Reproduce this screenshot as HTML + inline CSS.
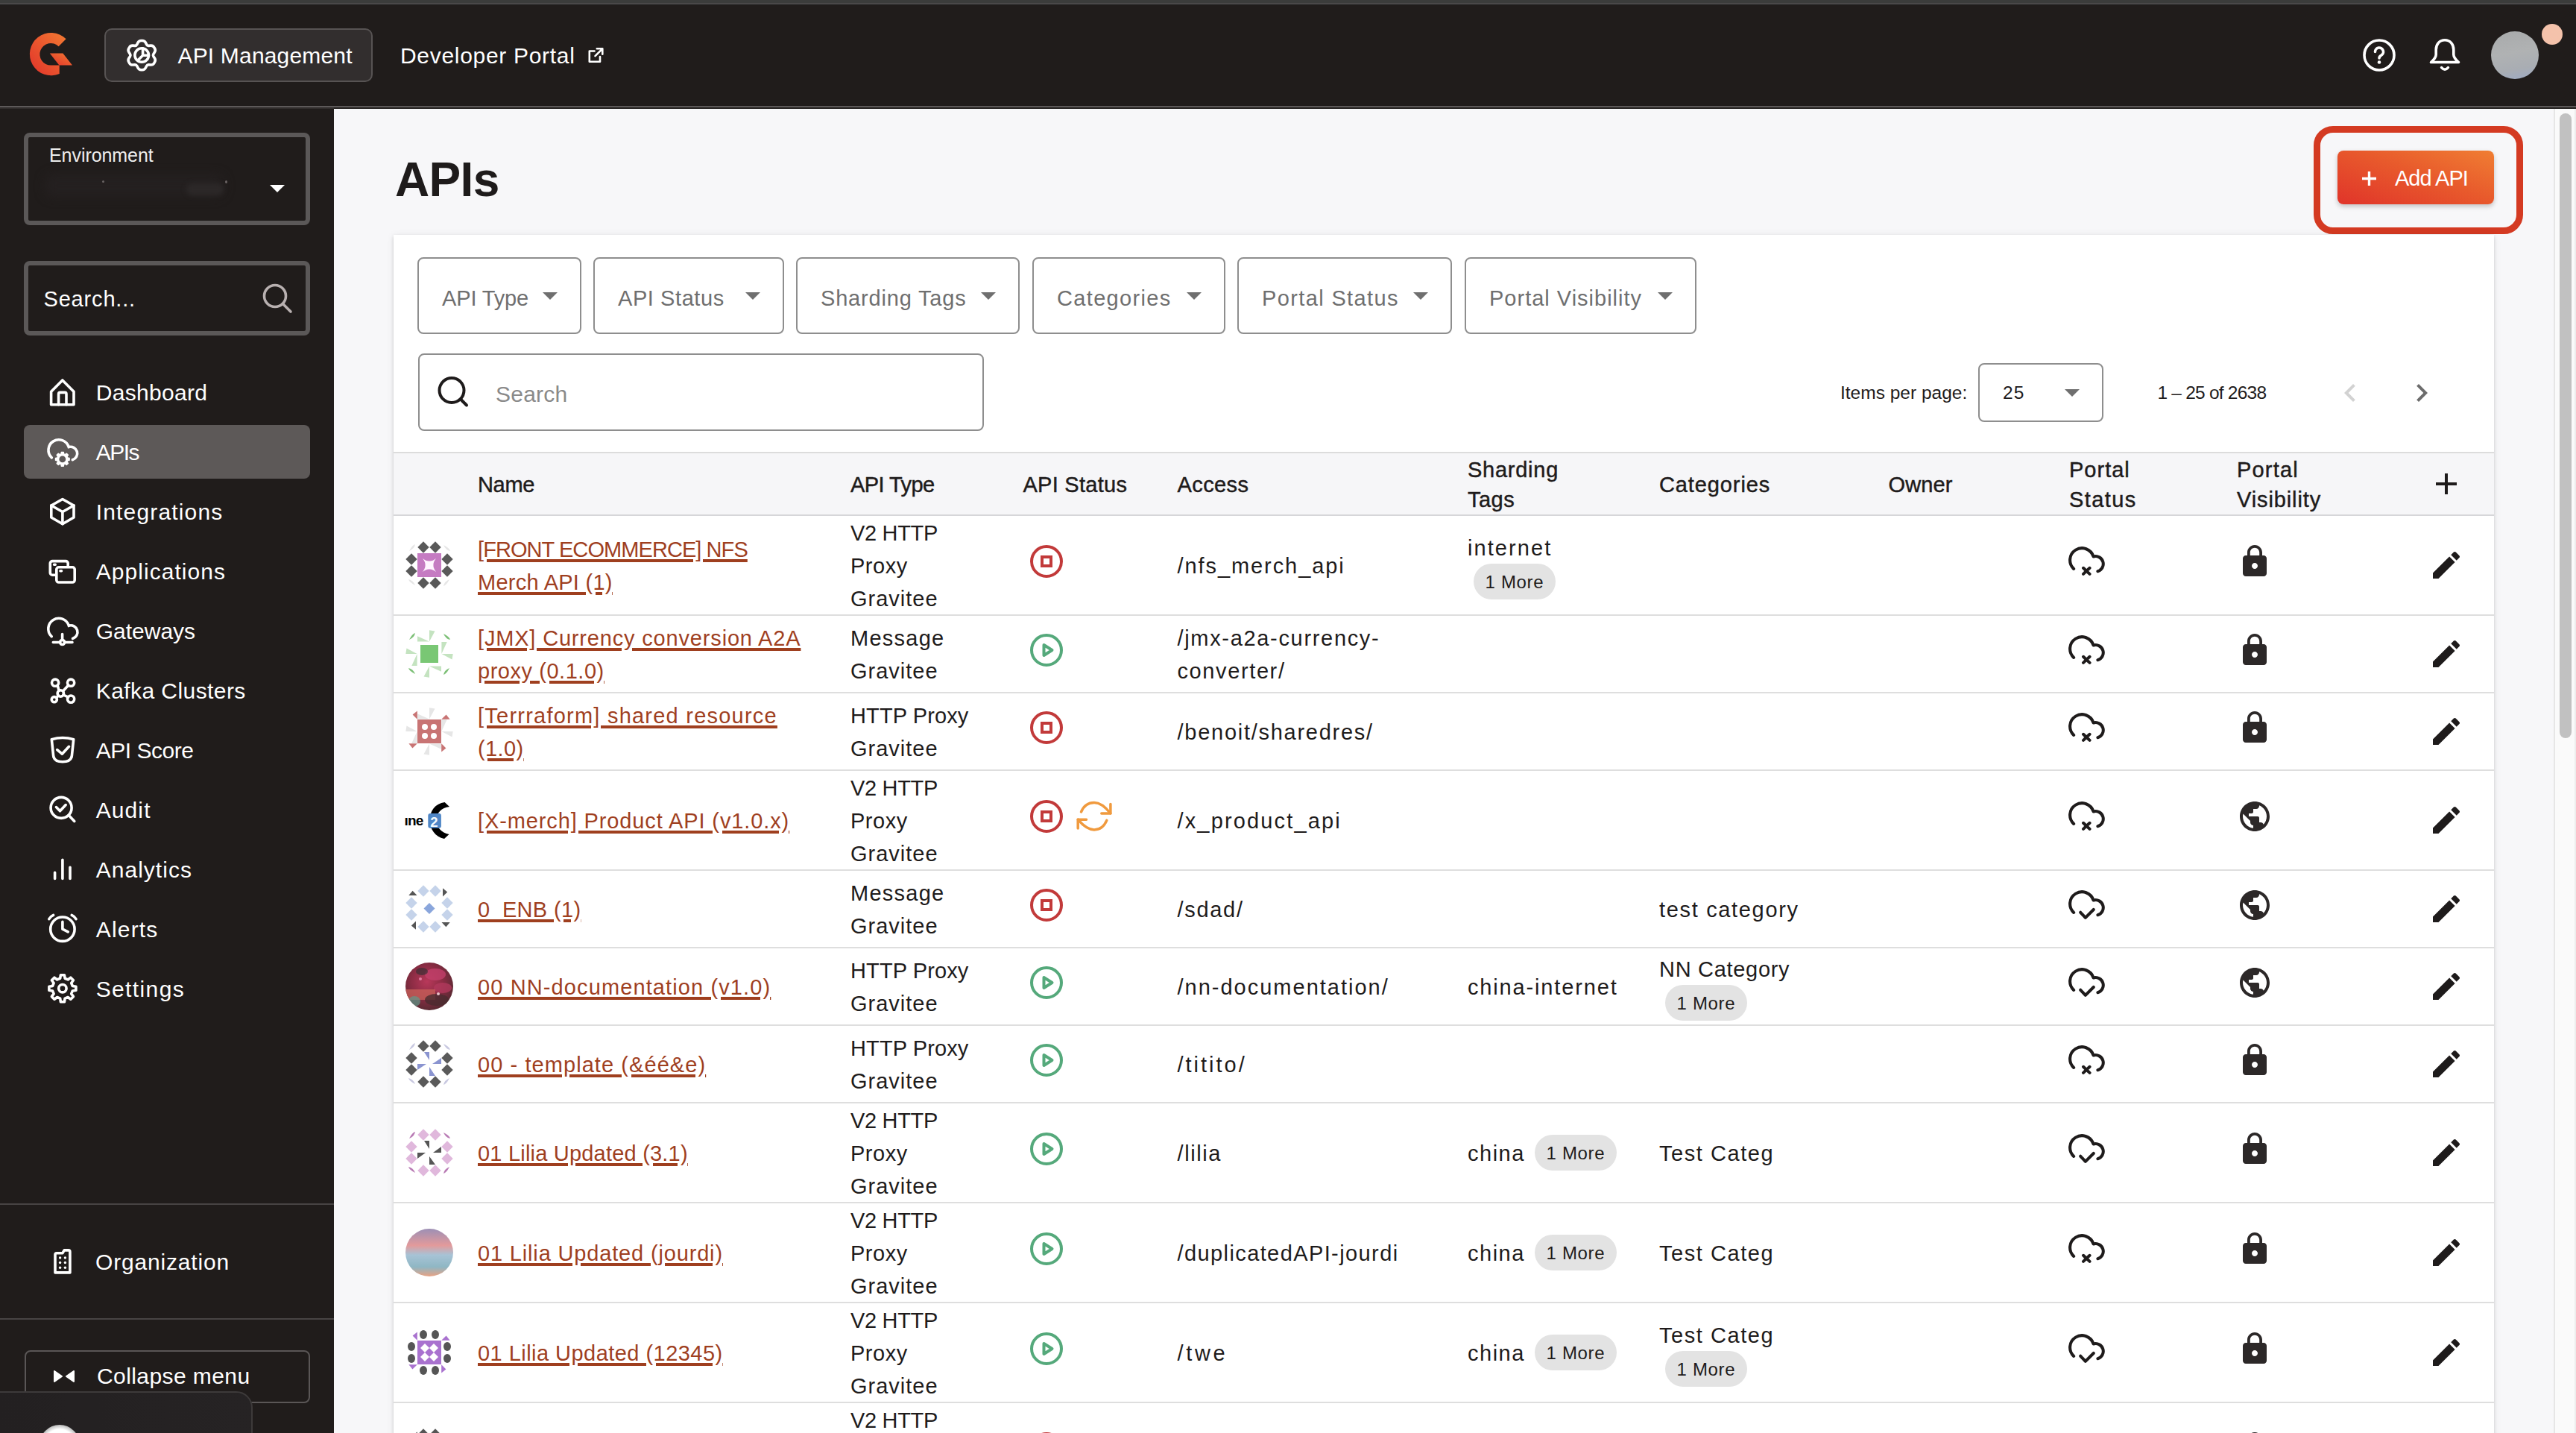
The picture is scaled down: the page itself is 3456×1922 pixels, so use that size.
<!DOCTYPE html><html><head><meta charset="utf-8"><title>APIs</title><style>
html,body{margin:0;padding:0}
body{width:3456px;height:1922px;overflow:hidden;position:relative;background:#f7f7f9;font-family:"Liberation Sans",sans-serif}
.t{position:absolute;white-space:nowrap}
svg{overflow:visible}
</style></head><body>
<div style="position:absolute;left:0px;top:0px;width:3456px;height:4px;background:#3b3c3b"></div>
<div style="position:absolute;left:0px;top:4px;width:3456px;height:2px;background:#4a4849"></div>
<div style="position:absolute;left:0px;top:6px;width:3456px;height:1px;background:#1c1b1b"></div>
<div style="position:absolute;left:0px;top:7px;width:3456px;height:135px;background:#201c1b"></div>
<div style="position:absolute;left:0px;top:142px;width:3456px;height:2px;background:#5d5959"></div>
<div style="position:absolute;left:0px;top:144px;width:448px;height:2px;background:#302c2b"></div>
<div style="position:absolute;left:448px;top:144px;width:3008px;height:2px;background:#242120"></div>
<div style="position:absolute;left:0px;top:146px;width:448px;height:1776px;background:#201c1b"></div>
<svg style="position:absolute;left:30px;top:35px;" width="80" height="80" viewBox="0 0 80 80"><defs><linearGradient id="lg" x1="0" y1="1" x2="1" y2="0"><stop offset="0" stop-color="#e2322a"/><stop offset="1" stop-color="#f27a32"/></linearGradient></defs>
<path fill="url(#lg)" d="M58.6 17.3 A28.6 28.6 0 1 0 49.7 63.9 L49.7 52.6 L38.4 52.6 A14.8 14.8 0 1 1 48.6 27.3 Z"/>
<path fill="url(#lg)" d="M36.8 36.4 L54.4 36.4 L67 52.4 L49.4 52.4 Z"/></svg>
<div style="position:absolute;left:140px;top:38px;width:360px;height:72px;background:#322e2e;border:2px solid #575353;border-radius:10px;box-sizing:border-box"></div>
<svg style="position:absolute;left:160px;top:45px" width="60" height="60" viewBox="160 45 60 60"><g fill="none" stroke="#fff" stroke-width="3.6" stroke-linecap="round" stroke-linejoin="round"><path d="M189.38 54.47 L191.02 54.47 Q194.02 54.47 195.35 57.15 L196.61 59.67 Q197.50 61.46 199.50 61.33 L202.30 61.16 Q205.29 60.98 206.79 63.58 L207.61 64.99 Q209.11 67.59 207.45 70.09 L205.90 72.43 Q204.80 74.10 205.90 75.77 L207.45 78.11 Q209.11 80.61 207.61 83.21 L206.79 84.62 Q205.29 87.22 202.30 87.04 L199.50 86.87 Q197.50 86.74 196.61 88.53 L195.35 91.05 Q194.02 93.73 191.02 93.73 L189.38 93.73 Q186.38 93.73 185.05 91.05 L183.79 88.53 Q182.90 86.74 180.90 86.87 L178.10 87.04 Q175.11 87.22 173.61 84.62 L172.79 83.21 Q171.29 80.61 172.95 78.11 L174.50 75.77 Q175.60 74.10 174.50 72.43 L172.95 70.09 Q171.29 67.59 172.79 64.99 L173.61 63.58 Q175.11 60.98 178.10 61.16 L180.90 61.33 Q182.90 61.46 183.79 59.67 L185.05 57.15 Q186.38 54.47 189.38 54.47 Z"/><circle cx="190.2" cy="74" r="9.3"/><path d="M191.6 64.8 V74.3 H199.4 M191.6 74.3 L185.6 80.2"/></g></svg>
<div class="t" style="left:238.5px;top:60.1px;font-size:30px;line-height:30px;color:#ffffff;letter-spacing:0.169px;font-weight:400;">API Management</div>
<div class="t" style="left:537px;top:59.9px;font-size:30px;line-height:30px;color:#ffffff;letter-spacing:0.693px;font-weight:400;">Developer Portal</div>
<svg style="position:absolute;left:780px;top:55px" width="40" height="40" viewBox="780 55 40 40"><g fill="none" stroke="#fff" stroke-width="2.6" stroke-linecap="round" stroke-linejoin="round"><path d="M797.5 68.5 H790.8 V82.8 H805 V76"/><path d="M798.5 75.2 L807.8 65.8 M800.8 65.3 H808.3 V72.8"/></g></svg>
<svg style="position:absolute;left:3168px;top:50px;" width="48" height="48" viewBox="0 0 48 48"><g fill="none" stroke="#fff" stroke-width="3.6" stroke-linecap="round"><circle cx="24" cy="24" r="20"/><path d="M18.5 19.5 a5.5 5.5 0 1 1 8 4.9 c-1.6 .8 -2.5 1.9 -2.5 3.6"/></g><circle cx="24" cy="33.5" r="2.3" fill="#fff"/></svg>
<svg style="position:absolute;left:3258px;top:50px;" width="44" height="48" viewBox="0 0 44 48"><g fill="none" stroke="#fff" stroke-width="3.6" stroke-linejoin="round" stroke-linecap="round"><path d="M22 3.8 c-7.5 0 -11.8 6 -11.8 13 v6.5 c0 3.5 -2.5 6.5 -6.7 10.2 h37 c-4.2 -3.7 -6.7 -6.7 -6.7 -10.2 v-6.5 c0 -7 -4.3 -13 -11.8 -13 z"/><path d="M17.6 40.6 q4.4 5 8.8 0"/></g></svg>
<div style="position:absolute;left:3342px;top:42px;width:64px;height:64px;border-radius:50%;background:linear-gradient(170deg,#a8aaab 0%,#b0b2b3 45%,#a9adb3 75%,#9dabc6 100%)"></div>
<div style="position:absolute;left:3410px;top:32px;width:28px;height:28px;border-radius:50%;background:#f4c2ab"></div>
<div style="position:absolute;left:32px;top:178px;width:384px;height:124px;border:6px solid #5b5858;border-radius:8px;box-sizing:border-box"></div>
<div class="t" style="left:66px;top:196.2px;font-size:25px;line-height:25px;color:#eeeeee;letter-spacing:-0.060px;font-weight:400;">Environment</div>
<div style="position:absolute;left:60px;top:234px;width:240px;height:30px;background:#242020;border-radius:12px;filter:blur(7px)"></div><div style="position:absolute;left:250px;top:246px;width:50px;height:16px;background:#2c2828;border-radius:8px;filter:blur(3px)"></div><div style="position:absolute;left:137px;top:242px;width:3px;height:3px;background:#6a6464;border-radius:50%"></div><div style="position:absolute;left:302px;top:242px;width:3px;height:4px;background:#6a6464;border-radius:50%"></div>
<svg style="position:absolute;left:362px;top:248px;" width="20" height="10" viewBox="0 0 20 10"><path d="M0 0 L20 0 L10 10 Z" fill="#fff"/></svg>
<div style="position:absolute;left:32px;top:350px;width:384px;height:100px;border:6px solid #5b5858;border-radius:8px;box-sizing:border-box"></div>
<div class="t" style="left:58.5px;top:386.7px;font-size:29px;line-height:29px;color:#ffffff;letter-spacing:0.825px;font-weight:400;">Search...</div>
<svg style="position:absolute;left:352px;top:380px;" width="40" height="40" viewBox="0 0 40 40"><g fill="none" stroke="#b8b0b0" stroke-width="3.6" stroke-linecap="round"><circle cx="17" cy="17" r="14.5"/><path d="M27.5 27.5 L38 38"/></g></svg>
<div style="position:absolute;left:32px;top:570px;width:384px;height:72px;background:#5d5958;border-radius:8px"></div>
<div class="t" style="left:128.7px;top:512.0px;font-size:30px;line-height:30px;color:#ffffff;letter-spacing:0.325px;font-weight:400;">Dashboard</div>
<div class="t" style="left:128.7px;top:592.0px;font-size:30px;line-height:30px;color:#ffffff;letter-spacing:-1.533px;font-weight:400;">APIs</div>
<div class="t" style="left:128.7px;top:672.0px;font-size:30px;line-height:30px;color:#ffffff;letter-spacing:1.164px;font-weight:400;">Integrations</div>
<div class="t" style="left:128.7px;top:752.0px;font-size:30px;line-height:30px;color:#ffffff;letter-spacing:1.055px;font-weight:400;">Applications</div>
<div class="t" style="left:128.7px;top:832.0px;font-size:30px;line-height:30px;color:#ffffff;letter-spacing:0.000px;font-weight:400;">Gateways</div>
<div class="t" style="left:128.7px;top:912.0px;font-size:30px;line-height:30px;color:#ffffff;letter-spacing:0.431px;font-weight:400;">Kafka Clusters</div>
<div class="t" style="left:128.7px;top:992.0px;font-size:30px;line-height:30px;color:#ffffff;letter-spacing:-0.475px;font-weight:400;">API Score</div>
<div class="t" style="left:128.7px;top:1072.0px;font-size:30px;line-height:30px;color:#ffffff;letter-spacing:1.100px;font-weight:400;">Audit</div>
<div class="t" style="left:128.7px;top:1152.0px;font-size:30px;line-height:30px;color:#ffffff;letter-spacing:1.025px;font-weight:400;">Analytics</div>
<div class="t" style="left:128.7px;top:1232.0px;font-size:30px;line-height:30px;color:#ffffff;letter-spacing:1.200px;font-weight:400;">Alerts</div>
<div class="t" style="left:128.7px;top:1312.0px;font-size:30px;line-height:30px;color:#ffffff;letter-spacing:1.371px;font-weight:400;">Settings</div>
<svg style="position:absolute;left:40px;top:490px" width="80" height="880" viewBox="40 490 80 880"><g fill="none" stroke="#fff" stroke-width="3.6" stroke-linecap="round" stroke-linejoin="round"><path d="M68.6 542.7 V525.2 L83.8 510 L99 525.2 V542.7 Z"/><path d="M78.6 542.7 V528.4 Q78.6 526.4 80.6 526.4 H87 Q89 526.4 89 528.4 V542.7"/></g><path transform="translate(64.5,589.5) scale(0.82)" d="M5.9 29.7 A17 17 0 1 1 33.8 12.3 A10.5 10.5 0 0 1 40 33.2" fill="none" stroke="#fff" stroke-width="4.39" stroke-linecap="round"/><path d="M82.33 606.62 L85.27 606.62 L85.60 608.93 L87.45 609.70 L89.33 608.30 L91.40 610.37 L90.00 612.25 L90.77 614.10 L93.08 614.43 L93.08 617.37 L90.77 617.70 L90.00 619.55 L91.40 621.43 L89.33 623.50 L87.45 622.10 L85.60 622.87 L85.27 625.18 L82.33 625.18 L82.00 622.87 L80.15 622.10 L78.27 623.50 L76.20 621.43 L77.60 619.55 L76.83 617.70 L74.52 617.37 L74.52 614.43 L76.83 614.10 L77.60 612.25 L76.20 610.37 L78.27 608.30 L80.15 609.70 L82.00 608.93 Z" fill="#fff" stroke="#fff" stroke-width="1.5" stroke-linejoin="round"/><circle cx="83.8" cy="615.9" r="4.4" fill="#5d5958"/><g fill="none" stroke="#fff" stroke-width="3.6" stroke-linecap="round" stroke-linejoin="round"><path d="M83.9 669.5 L99 678 V694 L83.9 702.7 L68.8 694 V678 Z"/><path d="M68.8 678 L83.9 686.5 L99 678 M83.9 686.5 V702.7"/></g><g fill="none" stroke="#fff" stroke-width="3.6" stroke-linecap="round" stroke-linejoin="round"><rect x="67.3" y="752.6" width="23.9" height="18.6" rx="3"/><rect x="75.8" y="760.8" width="24.4" height="20.2" rx="3" fill="#201c1b"/><path d="M72.6 757.3 h1.6 M80.9 765.8 h1.6"/></g><path transform="translate(64.3,829) scale(0.83)" d="M5.9 29.7 A17 17 0 1 1 33.8 12.3 A10.5 10.5 0 0 1 40 33.2" fill="none" stroke="#fff" stroke-width="4.34" stroke-linecap="round"/><g fill="none" stroke="#fff" stroke-width="3.6" stroke-linecap="round" stroke-linejoin="round"><path d="M71.3 861.5 H80.6 M86.6 861.5 H97 M83.6 850.5 V858.4"/><circle cx="83.6" cy="861.5" r="3"/></g><g fill="none" stroke="#fff" stroke-width="3.6" stroke-linecap="round" stroke-linejoin="round"><circle cx="74.1" cy="915.7" r="4.6"/><circle cx="95.1" cy="915.7" r="4.6"/><circle cx="81.3" cy="930" r="4.2"/><circle cx="72.8" cy="938.2" r="3.6"/><circle cx="95.1" cy="937.6" r="4.6"/><path d="M77.2 919.2 L79.2 926.4 M91.8 919 L84.5 927 M78.5 933 L75.6 935.6 M85 932 L91.6 935.2"/></g><g fill="none" stroke="#fff" stroke-width="3.6" stroke-linecap="round" stroke-linejoin="round"><path d="M69.3 991.8 Q84 987.2 98.7 991.8 L96.4 1013.5 Q95.6 1021.7 84 1021.7 Q72.4 1021.7 71.6 1013.5 Z"/><path d="M76.7 1005.6 L83.3 1011.2 L92.5 1001.3"/></g><g fill="none" stroke="#fff" stroke-width="3.6" stroke-linecap="round" stroke-linejoin="round"><circle cx="82.1" cy="1083.4" r="14"/><path d="M92.2 1093.6 L99.8 1101.4"/><path d="M75.4 1082.6 L80.5 1087.8 L88.2 1079.6"/></g><g fill="none" stroke="#fff" stroke-width="3.6" stroke-linecap="round" stroke-linejoin="round"><path d="M73.6 1170.2 V1178.4 M83.9 1153.3 V1178.4 M94 1163.3 V1178.4"/></g><g fill="none" stroke="#fff" stroke-width="3.6" stroke-linecap="round" stroke-linejoin="round"><circle cx="83.9" cy="1246.2" r="16.2"/><path d="M83.9 1236.4 V1246.2 L91.3 1249.8"/><path d="M65.8 1232.6 Q68 1229 71.6 1227.4 M102 1232.6 Q99.8 1229 96.2 1227.4"/></g><g fill="none" stroke="#fff" stroke-width="3.6" stroke-linecap="round" stroke-linejoin="round"><path d="M81.37 1307.68 L86.43 1307.68 L87.12 1312.28 L91.11 1313.93 L94.85 1311.16 L98.44 1314.75 L95.67 1318.49 L97.32 1322.48 L101.92 1323.17 L101.92 1328.23 L97.32 1328.92 L95.67 1332.91 L98.44 1336.65 L94.85 1340.24 L91.11 1337.47 L87.12 1339.12 L86.43 1343.72 L81.37 1343.72 L80.68 1339.12 L76.69 1337.47 L72.95 1340.24 L69.36 1336.65 L72.13 1332.91 L70.48 1328.92 L65.88 1328.23 L65.88 1323.17 L70.48 1322.48 L72.13 1318.49 L69.36 1314.75 L72.95 1311.16 L76.69 1313.93 L80.68 1312.28 Z"/><circle cx="83.9" cy="1325.7" r="5.2"/></g></svg>
<div style="position:absolute;left:0px;top:1614px;width:448px;height:2px;background:#484444"></div>
<svg style="position:absolute;left:60px;top:1660px" width="60" height="60" viewBox="60 1660 60 60"><g fill="none" stroke="#fff" stroke-width="3.6" stroke-linecap="round" stroke-linejoin="round" stroke-width="3.8"><path d="M74 1706.9 V1682.7 Q74 1680.7 76 1680.7 H84 L86.2 1676.9 H91.8 Q93.9 1676.9 93.9 1679 V1706.9 Z"/></g><g fill="#fff"><circle cx="80.6" cy="1687" r="1.7"/><circle cx="87.4" cy="1687" r="1.7"/><circle cx="80.6" cy="1693.5" r="1.7"/><circle cx="87.4" cy="1693.5" r="1.7"/><circle cx="80.6" cy="1700.2" r="1.7"/><circle cx="87.4" cy="1700.2" r="1.7"/></g></svg>
<div class="t" style="left:128px;top:1678.1px;font-size:30px;line-height:30px;color:#ffffff;letter-spacing:0.818px;font-weight:400;">Organization</div>
<div style="position:absolute;left:0px;top:1768px;width:448px;height:2px;background:#484444"></div>
<div style="position:absolute;left:33px;top:1811px;width:383px;height:71px;border:2px solid #5a5656;border-radius:8px;box-sizing:border-box"></div>
<svg style="position:absolute;left:72px;top:1838px;" width="28" height="16" viewBox="0 0 28 16"><path d="M1 1 L11 8 L1 15 Z M27 1 L17 8 L27 15 Z" fill="#fff" stroke="#fff" stroke-width="2" stroke-linejoin="round"/></svg>
<div class="t" style="left:130px;top:1831.4px;font-size:30px;line-height:30px;color:#ffffff;letter-spacing:0.417px;font-weight:400;">Collapse menu</div>
<div style="position:absolute;left:-4px;top:1866px;width:343px;height:80px;background:linear-gradient(90deg,#232021,#262324);border:2px solid #3d3a3a;border-top-right-radius:22px;box-sizing:border-box"></div>
<div style="position:absolute;left:53px;top:1911px;width:54px;height:54px;border-radius:50%;background:radial-gradient(circle,#ffffff 55%,#bdbdbd 70%,#ffffff 85%)"></div>
<div style="position:absolute;left:3426px;top:146px;width:30px;height:1776px;background:#fafafa"></div>
<div style="position:absolute;left:3426px;top:146px;width:2px;height:1776px;background:#e6e6e6"></div>
<div style="position:absolute;left:3454px;top:146px;width:2px;height:1776px;background:#ededed"></div>
<div style="position:absolute;left:3434px;top:152px;width:16px;height:838px;background:#c1c1c1;border-radius:8px"></div>
<div class="t" style="left:530px;top:208.8px;font-size:64px;line-height:64px;color:#1e1b1b;letter-spacing:-0.667px;font-weight:700;">APIs</div>
<div style="position:absolute;left:3136px;top:202px;width:210px;height:72px;border-radius:8px;background:linear-gradient(20deg,#e0342a 0%,#e85a2c 55%,#f07e33 100%);box-shadow:0 3px 6px rgba(0,0,0,.22)"></div>
<svg style="position:absolute;left:3168px;top:229px;" width="21" height="21" viewBox="0 0 21 21"><path d="M10.5 1 V20 M1 10.5 H20" stroke="#fff" stroke-width="3.4"/></svg>
<div class="t" style="left:3213px;top:224.5px;font-size:29px;line-height:29px;color:#ffffff;letter-spacing:-1.000px;font-weight:400;">Add API</div>
<div style="position:absolute;left:3104px;top:169px;width:281px;height:145px;border:9.5px solid #d43a22;border-radius:26px;box-sizing:border-box"></div>
<div style="position:absolute;left:528px;top:315px;width:2818px;height:1700px;background:#fff;box-shadow:0 2px 4px rgba(0,0,0,.14),0 1px 10px rgba(0,0,0,.08)"></div>
<div style="position:absolute;left:560px;top:345px;width:220px;height:103px;border:2px solid #8e8e8e;border-radius:8px;box-sizing:border-box"></div>
<div class="t" style="left:593px;top:385.5px;font-size:29px;line-height:29px;color:#6f6f6f;letter-spacing:-0.143px;font-weight:400;">API Type</div>
<svg style="position:absolute;left:728px;top:392px;" width="20" height="10" viewBox="0 0 20 10"><path d="M0 0 L20 0 L10 10 Z" fill="#6f6f6f"/></svg>
<div style="position:absolute;left:796px;top:345px;width:256px;height:103px;border:2px solid #8e8e8e;border-radius:8px;box-sizing:border-box"></div>
<div class="t" style="left:829px;top:385.5px;font-size:29px;line-height:29px;color:#6f6f6f;letter-spacing:0.578px;font-weight:400;">API Status</div>
<svg style="position:absolute;left:1000px;top:392px;" width="20" height="10" viewBox="0 0 20 10"><path d="M0 0 L20 0 L10 10 Z" fill="#6f6f6f"/></svg>
<div style="position:absolute;left:1068px;top:345px;width:300px;height:103px;border:2px solid #8e8e8e;border-radius:8px;box-sizing:border-box"></div>
<div class="t" style="left:1101px;top:385.5px;font-size:29px;line-height:29px;color:#6f6f6f;letter-spacing:0.817px;font-weight:400;">Sharding Tags</div>
<svg style="position:absolute;left:1316px;top:392px;" width="20" height="10" viewBox="0 0 20 10"><path d="M0 0 L20 0 L10 10 Z" fill="#6f6f6f"/></svg>
<div style="position:absolute;left:1385px;top:345px;width:259px;height:103px;border:2px solid #8e8e8e;border-radius:8px;box-sizing:border-box"></div>
<div class="t" style="left:1418px;top:385.5px;font-size:29px;line-height:29px;color:#6f6f6f;letter-spacing:1.333px;font-weight:400;">Categories</div>
<svg style="position:absolute;left:1592px;top:392px;" width="20" height="10" viewBox="0 0 20 10"><path d="M0 0 L20 0 L10 10 Z" fill="#6f6f6f"/></svg>
<div style="position:absolute;left:1660px;top:345px;width:288px;height:103px;border:2px solid #8e8e8e;border-radius:8px;box-sizing:border-box"></div>
<div class="t" style="left:1693px;top:385.5px;font-size:29px;line-height:29px;color:#6f6f6f;letter-spacing:1.367px;font-weight:400;">Portal Status</div>
<svg style="position:absolute;left:1896px;top:392px;" width="20" height="10" viewBox="0 0 20 10"><path d="M0 0 L20 0 L10 10 Z" fill="#6f6f6f"/></svg>
<div style="position:absolute;left:1965px;top:345px;width:311px;height:103px;border:2px solid #8e8e8e;border-radius:8px;box-sizing:border-box"></div>
<div class="t" style="left:1998px;top:385.5px;font-size:29px;line-height:29px;color:#6f6f6f;letter-spacing:1.000px;font-weight:400;">Portal Visibility</div>
<svg style="position:absolute;left:2224px;top:392px;" width="20" height="10" viewBox="0 0 20 10"><path d="M0 0 L20 0 L10 10 Z" fill="#6f6f6f"/></svg>
<div style="position:absolute;left:561px;top:474px;width:759px;height:104px;border:2px solid #8e8e8e;border-radius:8px;box-sizing:border-box"></div>
<svg style="position:absolute;left:586px;top:504px;" width="44" height="44" viewBox="0 0 44 44"><g fill="none" stroke="#1e1b1b" stroke-width="4" stroke-linecap="round"><circle cx="20" cy="19.5" r="16.5"/><path d="M32 31.5 L40 39.5"/></g></svg>
<div class="t" style="left:665px;top:514.4px;font-size:30px;line-height:30px;color:#8a8a8a;letter-spacing:0.240px;font-weight:400;">Search</div>
<div class="t" style="left:2469px;top:514.7px;font-size:24.5px;line-height:24.5px;color:#1e1b1b;letter-spacing:0.000px;font-weight:400;">Items per page:</div>
<div style="position:absolute;left:2654px;top:487px;width:168px;height:79px;border:2px solid #8e8e8e;border-radius:8px;box-sizing:border-box"></div>
<div class="t" style="left:2687px;top:514.7px;font-size:24.5px;line-height:24.5px;color:#1e1b1b;letter-spacing:1.000px;font-weight:400;">25</div>
<svg style="position:absolute;left:2770px;top:522px;" width="20" height="10" viewBox="0 0 20 10"><path d="M0 0 L20 0 L10 10 Z" fill="#6f6f6f"/></svg>
<div class="t" style="left:2894.4px;top:514.7px;font-size:24.5px;line-height:24.5px;color:#1e1b1b;letter-spacing:-0.769px;font-weight:400;">1 – 25 of 2638</div>
<svg style="position:absolute;left:3129px;top:503px;" width="48" height="48" viewBox="0 0 24 24"><path d="M15.41 7.41L14 6l-6 6 6 6 1.41-1.41L10.83 12z" fill="#d2d2d2"/></svg>
<svg style="position:absolute;left:3225px;top:503px;" width="48" height="48" viewBox="0 0 24 24"><path d="M10 6L8.59 7.41 13.17 12l-4.58 4.59L10 18l6-6z" fill="#6c6c6c"/></svg>
<div style="position:absolute;left:528px;top:606px;width:2818px;height:2px;background:#dcdcdc"></div>
<div style="position:absolute;left:528px;top:608px;width:2818px;height:82px;background:#f6f6f8"></div>
<div style="position:absolute;left:528px;top:690px;width:2818px;height:2px;background:#d6d6d9"></div>
<div class="t" style="left:641px;top:635.5px;font-size:29px;line-height:29px;color:#1e1b1b;letter-spacing:-0.333px;font-weight:400;-webkit-text-stroke:0.45px #1e1b1b;">Name</div>
<div class="t" style="left:1141px;top:635.5px;font-size:29px;line-height:29px;color:#1e1b1b;letter-spacing:-0.571px;font-weight:400;-webkit-text-stroke:0.45px #1e1b1b;">API Type</div>
<div class="t" style="left:1372.5px;top:635.5px;font-size:29px;line-height:29px;color:#1e1b1b;letter-spacing:0.267px;font-weight:400;-webkit-text-stroke:0.45px #1e1b1b;">API Status</div>
<div class="t" style="left:1579.5px;top:635.5px;font-size:29px;line-height:29px;color:#1e1b1b;letter-spacing:0.400px;font-weight:400;-webkit-text-stroke:0.45px #1e1b1b;">Access</div>
<div class="t" style="left:1969px;top:615.5px;font-size:29px;line-height:29px;color:#1e1b1b;letter-spacing:0.743px;font-weight:400;-webkit-text-stroke:0.45px #1e1b1b;">Sharding</div>
<div class="t" style="left:1969px;top:655.5px;font-size:29px;line-height:29px;color:#1e1b1b;letter-spacing:0.467px;font-weight:400;-webkit-text-stroke:0.45px #1e1b1b;">Tags</div>
<div class="t" style="left:2226px;top:635.5px;font-size:29px;line-height:29px;color:#1e1b1b;letter-spacing:0.889px;font-weight:400;-webkit-text-stroke:0.45px #1e1b1b;">Categories</div>
<div class="t" style="left:2533.5px;top:635.5px;font-size:29px;line-height:29px;color:#1e1b1b;letter-spacing:0.100px;font-weight:400;-webkit-text-stroke:0.45px #1e1b1b;">Owner</div>
<div class="t" style="left:2776px;top:615.5px;font-size:29px;line-height:29px;color:#1e1b1b;letter-spacing:1.000px;font-weight:400;-webkit-text-stroke:0.45px #1e1b1b;">Portal</div>
<div class="t" style="left:2776px;top:655.5px;font-size:29px;line-height:29px;color:#1e1b1b;letter-spacing:1.400px;font-weight:400;-webkit-text-stroke:0.45px #1e1b1b;">Status</div>
<div class="t" style="left:3001px;top:615.5px;font-size:29px;line-height:29px;color:#1e1b1b;letter-spacing:1.200px;font-weight:400;-webkit-text-stroke:0.45px #1e1b1b;">Portal</div>
<div class="t" style="left:3001px;top:655.5px;font-size:29px;line-height:29px;color:#1e1b1b;letter-spacing:0.889px;font-weight:400;-webkit-text-stroke:0.45px #1e1b1b;">Visibility</div>
<svg style="position:absolute;left:3258px;top:625px;" width="48" height="48" viewBox="0 0 24 24"><path d="M19 13h-6v6h-2v-6H5v-2h6V5h2v6h6v2z" fill="#1e1b1b"/></svg>
<div style="position:absolute;left:528px;top:824px;width:2818px;height:2px;background:#dedede"></div>
<svg style="position:absolute;left:544px;top:726.0px;" width="64" height="64" viewBox="0 0 64 64"><path d="M24 0.2999999999999998 L31.7 8 L24 15.7 L16.3 8 Z" fill="#595959"/><path d="M40 0.2999999999999998 L47.7 8 L40 15.7 L32.3 8 Z" fill="#595959"/><path d="M8 16.3 L15.7 24 L8 31.7 L0.2999999999999998 24 Z" fill="#595959"/><path d="M8 32.3 L15.7 40 L8 47.7 L0.2999999999999998 40 Z" fill="#595959"/><path d="M56 16.3 L63.7 24 L56 31.7 L48.3 24 Z" fill="#595959"/><path d="M56 32.3 L63.7 40 L56 47.7 L48.3 40 Z" fill="#595959"/><path d="M24 48.3 L31.7 56 L24 63.7 L16.3 56 Z" fill="#595959"/><path d="M40 48.3 L47.7 56 L40 63.7 L32.3 56 Z" fill="#595959"/><path transform="rotate(0 32 32)" d="M5 13 Q9 5 13 4 Q12 10 5 13 Z" fill="#e6e6e6"/><path transform="rotate(90 32 32)" d="M5 13 Q9 5 13 4 Q12 10 5 13 Z" fill="#e6e6e6"/><path transform="rotate(180 32 32)" d="M5 13 Q9 5 13 4 Q12 10 5 13 Z" fill="#e6e6e6"/><path transform="rotate(270 32 32)" d="M5 13 Q9 5 13 4 Q12 10 5 13 Z" fill="#e6e6e6"/><rect x="24" y="26" width="32" height="32" fill="#c57bc2" transform="translate(-8,-10)"/><path d="M31 33 Q33 31 38 26 L38 26" fill="none"/><path d="M23 23 Q28 27 32 26.5 Q36 27 41 23 Q37 28 37.5 32 Q37 36 41 41 Q36 37 32 37.5 Q28 37 23 41 Q27 36 26.5 32 Q27 28 23 23 Z" fill="#fff5ff"/></svg>
<div class="t" style="left:641px;top:722.5px;font-size:29px;line-height:29px;color:#9f3f1f;letter-spacing:-0.929px;font-weight:400;text-decoration:underline;text-decoration-thickness:4px;text-underline-offset:3px;">[FRONT ECOMMERCE] NFS</div>
<div class="t" style="left:641px;top:766.5px;font-size:29px;line-height:29px;color:#9f3f1f;letter-spacing:0.269px;font-weight:400;text-decoration:underline;text-decoration-thickness:4px;text-underline-offset:3px;">Merch API (1)</div>
<div class="t" style="left:1141px;top:700.5px;font-size:29px;line-height:29px;color:#1e1b1b;letter-spacing:-0.333px;font-weight:400;">V2 HTTP</div>
<div class="t" style="left:1141px;top:744.5px;font-size:29px;line-height:29px;color:#1e1b1b;letter-spacing:0.500px;font-weight:400;">Proxy</div>
<div class="t" style="left:1141px;top:788.5px;font-size:29px;line-height:29px;color:#1e1b1b;letter-spacing:1.000px;font-weight:400;">Gravitee</div>
<div class="t" style="left:1579.5px;top:744.5px;font-size:29px;line-height:29px;color:#1e1b1b;letter-spacing:1.923px;font-weight:400;">/nfs_merch_api</div>
<svg style="position:absolute;left:1379.6px;top:729.0px;" width="48" height="48" viewBox="0 0 48 48"><g fill="none" stroke="#c23a3a" stroke-width="4"><circle cx="24" cy="24" r="20"/><rect x="18" y="18" width="12" height="12"/></g></svg>
<div class="t" style="left:1969px;top:720.5px;font-size:29px;line-height:29px;color:#1e1b1b;letter-spacing:2.071px;font-weight:400;">internet</div>
<div style="position:absolute;left:1977px;top:756.0px;width:110px;height:48px;border-radius:24px;background:#e3e3e3"></div>
<div class="t" style="left:1992.5px;top:769.2px;font-size:24px;line-height:24px;color:#1e1b1b;letter-spacing:0.680px;font-weight:400;">1 More</div>
<svg style="position:absolute;left:2776px;top:734.0px;" width="48" height="40" viewBox="0 0 48 40"><g transform="translate(0.6,0.9) scale(0.945)" fill="none" stroke="#1e1b1b" stroke-width="4.3" stroke-linecap="round" stroke-linejoin="round"><path d="M5.9 29.7 A17 17 0 1 1 33.8 12.3 A10.5 10.5 0 0 1 40 33.2"/><path d="M19.5 28.5 L28.5 37 M28.5 28.5 L19.5 37"/></g></svg>
<svg style="position:absolute;left:3000.6px;top:729.0px;" width="48" height="48" viewBox="0 0 24 24"><path fill="#2c2828" d="M18 8h-1V6c0-2.76-2.24-5-5-5S7 3.24 7 6v2H6c-1.1 0-2 .9-2 2v10c0 1.1.9 2 2 2h12c1.1 0 2-.9 2-2V10c0-1.1-.9-2-2-2zm-6 9c-1.1 0-2-.9-2-2s.9-2 2-2 2 .9 2 2-.9 2-2 2zm3.1-9H8.9V6c0-1.71 1.39-3.1 3.1-3.1 1.71 0 3.1 1.39 3.1 3.1v2z"/></svg>
<svg style="position:absolute;left:3258px;top:734.0px;" width="48" height="48" viewBox="0 0 24 24"><path fill="#1e1b1b" d="M3 17.25V21h3.75L17.81 9.94l-3.75-3.75L3 17.25zM20.71 7.04c.39-.39.39-1.02 0-1.41l-2.34-2.34c-.39-.39-1.02-.39-1.41 0l-1.83 1.83 3.75 3.75 1.83-1.83z"/></svg>
<div style="position:absolute;left:528px;top:928px;width:2818px;height:2px;background:#dedede"></div>
<svg style="position:absolute;left:544px;top:845.0px;" width="64" height="64" viewBox="0 0 64 64"><rect x="20" y="20" width="24" height="24" fill="#79c774"/><path transform="rotate(0 32 32)" d="M16 8.3 L16 15.6 L32 15.6 Z M32 0.3 L39.5 1.5 L32 15.6 Z" fill="#c4e3c0"/><path transform="rotate(90 32 32)" d="M16 8.3 L16 15.6 L32 15.6 Z M32 0.3 L39.5 1.5 L32 15.6 Z" fill="#c4e3c0"/><path transform="rotate(180 32 32)" d="M16 8.3 L16 15.6 L32 15.6 Z M32 0.3 L39.5 1.5 L32 15.6 Z" fill="#c4e3c0"/><path transform="rotate(270 32 32)" d="M16 8.3 L16 15.6 L32 15.6 Z M32 0.3 L39.5 1.5 L32 15.6 Z" fill="#c4e3c0"/><path transform="rotate(0 32 32)" d="M5 13 Q9 5 13 4 Q12 10 5 13 Z" fill="#7cbf76"/><path transform="rotate(90 32 32)" d="M5 13 Q9 5 13 4 Q12 10 5 13 Z" fill="#7cbf76"/><path transform="rotate(180 32 32)" d="M5 13 Q9 5 13 4 Q12 10 5 13 Z" fill="#7cbf76"/><path transform="rotate(270 32 32)" d="M5 13 Q9 5 13 4 Q12 10 5 13 Z" fill="#7cbf76"/></svg>
<div class="t" style="left:641px;top:841.5px;font-size:29px;line-height:29px;color:#9f3f1f;letter-spacing:0.828px;font-weight:400;text-decoration:underline;text-decoration-thickness:4px;text-underline-offset:3px;">[JMX] Currency conversion A2A</div>
<div class="t" style="left:641px;top:885.5px;font-size:29px;line-height:29px;color:#9f3f1f;letter-spacing:0.538px;font-weight:400;text-decoration:underline;text-decoration-thickness:4px;text-underline-offset:3px;">proxy (0.1.0)</div>
<div class="t" style="left:1141px;top:841.5px;font-size:29px;line-height:29px;color:#1e1b1b;letter-spacing:1.250px;font-weight:400;">Message</div>
<div class="t" style="left:1141px;top:885.5px;font-size:29px;line-height:29px;color:#1e1b1b;letter-spacing:1.000px;font-weight:400;">Gravitee</div>
<div class="t" style="left:1579.5px;top:841.5px;font-size:29px;line-height:29px;color:#1e1b1b;letter-spacing:1.676px;font-weight:400;">/jmx-a2a-currency-</div>
<div class="t" style="left:1579.5px;top:885.5px;font-size:29px;line-height:29px;color:#1e1b1b;letter-spacing:1.611px;font-weight:400;">converter/</div>
<svg style="position:absolute;left:1379.6px;top:848.0px;" width="48" height="48" viewBox="0 0 48 48"><g fill="none" stroke="#55a97b" stroke-width="4" stroke-linejoin="round"><circle cx="24" cy="24" r="20"/><path d="M20.5 17 L31.5 24 L20.5 31 Z"/></g></svg>
<svg style="position:absolute;left:2776px;top:853.0px;" width="48" height="40" viewBox="0 0 48 40"><g transform="translate(0.6,0.9) scale(0.945)" fill="none" stroke="#1e1b1b" stroke-width="4.3" stroke-linecap="round" stroke-linejoin="round"><path d="M5.9 29.7 A17 17 0 1 1 33.8 12.3 A10.5 10.5 0 0 1 40 33.2"/><path d="M19.5 28.5 L28.5 37 M28.5 28.5 L19.5 37"/></g></svg>
<svg style="position:absolute;left:3000.6px;top:848.0px;" width="48" height="48" viewBox="0 0 24 24"><path fill="#2c2828" d="M18 8h-1V6c0-2.76-2.24-5-5-5S7 3.24 7 6v2H6c-1.1 0-2 .9-2 2v10c0 1.1.9 2 2 2h12c1.1 0 2-.9 2-2V10c0-1.1-.9-2-2-2zm-6 9c-1.1 0-2-.9-2-2s.9-2 2-2 2 .9 2 2-.9 2-2 2zm3.1-9H8.9V6c0-1.71 1.39-3.1 3.1-3.1 1.71 0 3.1 1.39 3.1 3.1v2z"/></svg>
<svg style="position:absolute;left:3258px;top:853.0px;" width="48" height="48" viewBox="0 0 24 24"><path fill="#1e1b1b" d="M3 17.25V21h3.75L17.81 9.94l-3.75-3.75L3 17.25zM20.71 7.04c.39-.39.39-1.02 0-1.41l-2.34-2.34c-.39-.39-1.02-.39-1.41 0l-1.83 1.83 3.75 3.75 1.83-1.83z"/></svg>
<div style="position:absolute;left:528px;top:1032px;width:2818px;height:2px;background:#dedede"></div>
<svg style="position:absolute;left:544px;top:949.0px;" width="64" height="64" viewBox="0 0 64 64"><rect x="16" y="16" width="32" height="32" fill="#c87474"/><g fill="#fff"><circle cx="26" cy="26" r="4"/><circle cx="38" cy="26" r="4"/><circle cx="26" cy="38" r="4"/><circle cx="38" cy="38" r="4"/></g><path transform="rotate(0 32 32)" d="M16 8.3 L16 15.6 L32 15.6 Z M32 0.3 L39.5 1.5 L32 15.6 Z" fill="#e6e6e6"/><path transform="rotate(90 32 32)" d="M16 8.3 L16 15.6 L32 15.6 Z M32 0.3 L39.5 1.5 L32 15.6 Z" fill="#e6e6e6"/><path transform="rotate(180 32 32)" d="M16 8.3 L16 15.6 L32 15.6 Z M32 0.3 L39.5 1.5 L32 15.6 Z" fill="#e6e6e6"/><path transform="rotate(270 32 32)" d="M16 8.3 L16 15.6 L32 15.6 Z M32 0.3 L39.5 1.5 L32 15.6 Z" fill="#e6e6e6"/><path transform="rotate(0 32 32)" d="M9.6 9.4 L15.8 4.4 L15.8 15.8 Z" fill="#c87474"/><path transform="rotate(90 32 32)" d="M9.6 9.4 L15.8 4.4 L15.8 15.8 Z" fill="#c87474"/><path transform="rotate(180 32 32)" d="M9.6 9.4 L15.8 4.4 L15.8 15.8 Z" fill="#c87474"/><path transform="rotate(270 32 32)" d="M9.6 9.4 L15.8 4.4 L15.8 15.8 Z" fill="#c87474"/></svg>
<div class="t" style="left:641px;top:945.5px;font-size:29px;line-height:29px;color:#9f3f1f;letter-spacing:1.232px;font-weight:400;text-decoration:underline;text-decoration-thickness:4px;text-underline-offset:3px;">[Terrraform] shared resource</div>
<div class="t" style="left:641px;top:989.5px;font-size:29px;line-height:29px;color:#9f3f1f;letter-spacing:0.400px;font-weight:400;text-decoration:underline;text-decoration-thickness:4px;text-underline-offset:3px;">(1.0)</div>
<div class="t" style="left:1141px;top:945.5px;font-size:29px;line-height:29px;color:#1e1b1b;letter-spacing:0.111px;font-weight:400;">HTTP Proxy</div>
<div class="t" style="left:1141px;top:989.5px;font-size:29px;line-height:29px;color:#1e1b1b;letter-spacing:1.000px;font-weight:400;">Gravitee</div>
<div class="t" style="left:1579.5px;top:967.5px;font-size:29px;line-height:29px;color:#1e1b1b;letter-spacing:1.735px;font-weight:400;">/benoit/sharedres/</div>
<svg style="position:absolute;left:1379.6px;top:952.0px;" width="48" height="48" viewBox="0 0 48 48"><g fill="none" stroke="#c23a3a" stroke-width="4"><circle cx="24" cy="24" r="20"/><rect x="18" y="18" width="12" height="12"/></g></svg>
<svg style="position:absolute;left:2776px;top:957.0px;" width="48" height="40" viewBox="0 0 48 40"><g transform="translate(0.6,0.9) scale(0.945)" fill="none" stroke="#1e1b1b" stroke-width="4.3" stroke-linecap="round" stroke-linejoin="round"><path d="M5.9 29.7 A17 17 0 1 1 33.8 12.3 A10.5 10.5 0 0 1 40 33.2"/><path d="M19.5 28.5 L28.5 37 M28.5 28.5 L19.5 37"/></g></svg>
<svg style="position:absolute;left:3000.6px;top:952.0px;" width="48" height="48" viewBox="0 0 24 24"><path fill="#2c2828" d="M18 8h-1V6c0-2.76-2.24-5-5-5S7 3.24 7 6v2H6c-1.1 0-2 .9-2 2v10c0 1.1.9 2 2 2h12c1.1 0 2-.9 2-2V10c0-1.1-.9-2-2-2zm-6 9c-1.1 0-2-.9-2-2s.9-2 2-2 2 .9 2 2-.9 2-2 2zm3.1-9H8.9V6c0-1.71 1.39-3.1 3.1-3.1 1.71 0 3.1 1.39 3.1 3.1v2z"/></svg>
<svg style="position:absolute;left:3258px;top:957.0px;" width="48" height="48" viewBox="0 0 24 24"><path fill="#1e1b1b" d="M3 17.25V21h3.75L17.81 9.94l-3.75-3.75L3 17.25zM20.71 7.04c.39-.39.39-1.02 0-1.41l-2.34-2.34c-.39-.39-1.02-.39-1.41 0l-1.83 1.83 3.75 3.75 1.83-1.83z"/></svg>
<div style="position:absolute;left:528px;top:1166px;width:2818px;height:2px;background:#dedede"></div>
<svg style="position:absolute;left:544px;top:1068.0px;" width="64" height="64" viewBox="0 0 64 64"><path d="M52.6 8 C40 9.5 32.5 20 32.5 32 C32.5 44 40 54.5 52 57 L58.5 51 C48 49 41.5 41.5 41.5 32 C41.5 22.5 48 15.5 59 14 Z" fill="#000"/><text x="-1.5" y="38.6" font-family="Liberation Sans" font-size="19" font-weight="700" fill="#000" letter-spacing="-0.8">ıne</text><rect x="30.3" y="23" width="17.6" height="19.8" rx="3" fill="#4f86c6"/><text x="33.2" y="40.5" font-family="Liberation Sans" font-size="18.5" font-weight="700" fill="#f4fbff">2</text></svg>
<div class="t" style="left:641px;top:1086.5px;font-size:29px;line-height:29px;color:#9f3f1f;letter-spacing:0.883px;font-weight:400;text-decoration:underline;text-decoration-thickness:4px;text-underline-offset:3px;">[X-merch] Product API (v1.0.x)</div>
<div class="t" style="left:1141px;top:1042.5px;font-size:29px;line-height:29px;color:#1e1b1b;letter-spacing:-0.333px;font-weight:400;">V2 HTTP</div>
<div class="t" style="left:1141px;top:1086.5px;font-size:29px;line-height:29px;color:#1e1b1b;letter-spacing:0.500px;font-weight:400;">Proxy</div>
<div class="t" style="left:1141px;top:1130.5px;font-size:29px;line-height:29px;color:#1e1b1b;letter-spacing:1.000px;font-weight:400;">Gravitee</div>
<div class="t" style="left:1579.5px;top:1086.5px;font-size:29px;line-height:29px;color:#1e1b1b;letter-spacing:2.154px;font-weight:400;">/x_product_api</div>
<svg style="position:absolute;left:1379.6px;top:1071.0px;" width="48" height="48" viewBox="0 0 48 48"><g fill="none" stroke="#c23a3a" stroke-width="4"><circle cx="24" cy="24" r="20"/><rect x="18" y="18" width="12" height="12"/></g></svg>
<svg style="position:absolute;left:1438px;top:1065px" width="60" height="60" viewBox="1438 1065 60 60"><g transform="translate(1468,1095.0)" fill="none" stroke="#f09a3e" stroke-width="3.5" stroke-linecap="round" stroke-linejoin="round"><path d="M-17.5 -6 C-14 -14.5 -7.5 -18.5 0 -18.5 C7.5 -18.5 14 -14 21.9 -4"/><path d="M9.8 -4 H21.9 V-16.5"/><path d="M16.8 5.4 C13.5 13 7.5 17.9 0 17.9 C-7.5 17.9 -14 13.5 -21.8 4.2"/><path d="M-10.5 4.2 H-21.8 V15.9"/></g></svg>
<svg style="position:absolute;left:2776px;top:1076.0px;" width="48" height="40" viewBox="0 0 48 40"><g transform="translate(0.6,0.9) scale(0.945)" fill="none" stroke="#1e1b1b" stroke-width="4.3" stroke-linecap="round" stroke-linejoin="round"><path d="M5.9 29.7 A17 17 0 1 1 33.8 12.3 A10.5 10.5 0 0 1 40 33.2"/><path d="M19.5 28.5 L28.5 37 M28.5 28.5 L19.5 37"/></g></svg>
<svg style="position:absolute;left:3001px;top:1071.0px;" width="48" height="48" viewBox="0 0 24 24"><path fill="#2c2828" d="M12 2C6.48 2 2 6.48 2 12s4.48 10 10 10 10-4.48 10-10S17.52 2 12 2zm-1 17.930c-3.95-.49-7-3.850-7-7.930 0-.62.08-1.21.21-1.79L9 15v1c0 1.1.9 2 2 2v1.93zm6.9-2.54c-.26-.81-1-1.39-1.9-1.39h-1v-3c0-.55-.45-1-1-1H8v-2h2c.55 0 1-.45 1-1V7h2c1.1 0 2-.9 2-2v-.41c2.93 1.19 5 4.06 5 7.41 0 2.08-.8 3.97-2.1 5.39z"/></svg>
<svg style="position:absolute;left:3258px;top:1076.0px;" width="48" height="48" viewBox="0 0 24 24"><path fill="#1e1b1b" d="M3 17.25V21h3.75L17.81 9.94l-3.75-3.75L3 17.25zM20.71 7.04c.39-.39.39-1.02 0-1.41l-2.34-2.34c-.39-.39-1.02-.39-1.41 0l-1.83 1.83 3.75 3.75 1.83-1.83z"/></svg>
<div style="position:absolute;left:528px;top:1270px;width:2818px;height:2px;background:#dedede"></div>
<svg style="position:absolute;left:544px;top:1187.0px;" width="64" height="64" viewBox="0 0 64 64"><path d="M24 0.2999999999999998 L31.7 8 L24 15.7 L16.3 8 Z" fill="#c5d3ea"/><path d="M40 0.2999999999999998 L47.7 8 L40 15.7 L32.3 8 Z" fill="#c5d3ea"/><path d="M8 16.3 L15.7 24 L8 31.7 L0.2999999999999998 24 Z" fill="#c5d3ea"/><path d="M8 32.3 L15.7 40 L8 47.7 L0.2999999999999998 40 Z" fill="#c5d3ea"/><path d="M56 16.3 L63.7 24 L56 31.7 L48.3 24 Z" fill="#c5d3ea"/><path d="M56 32.3 L63.7 40 L56 47.7 L48.3 40 Z" fill="#c5d3ea"/><path d="M24 48.3 L31.7 56 L24 63.7 L16.3 56 Z" fill="#c5d3ea"/><path d="M40 48.3 L47.7 56 L40 63.7 L32.3 56 Z" fill="#c5d3ea"/><path d="M32 24.0 L39.5 31.5 L32 39.0 L24.5 31.5 Z" fill="#8aa6dc"/><path transform="rotate(0 32 32)" d="M4.3 14 L15.5 14 L9.6 7.8 Z" fill="#555555"/><path transform="rotate(90 32 32)" d="M4.3 14 L15.5 14 L9.6 7.8 Z" fill="#555555"/><path transform="rotate(180 32 32)" d="M4.3 14 L15.5 14 L9.6 7.8 Z" fill="#555555"/><path transform="rotate(270 32 32)" d="M4.3 14 L15.5 14 L9.6 7.8 Z" fill="#555555"/></svg>
<div class="t" style="left:641px;top:1205.5px;font-size:29px;line-height:29px;color:#9f3f1f;letter-spacing:0.333px;font-weight:400;text-decoration:underline;text-decoration-thickness:4px;text-underline-offset:3px;">0_ENB (1)</div>
<div class="t" style="left:1141px;top:1183.5px;font-size:29px;line-height:29px;color:#1e1b1b;letter-spacing:1.250px;font-weight:400;">Message</div>
<div class="t" style="left:1141px;top:1227.5px;font-size:29px;line-height:29px;color:#1e1b1b;letter-spacing:1.000px;font-weight:400;">Gravitee</div>
<div class="t" style="left:1579.5px;top:1205.5px;font-size:29px;line-height:29px;color:#1e1b1b;letter-spacing:1.700px;font-weight:400;">/sdad/</div>
<svg style="position:absolute;left:1379.6px;top:1190.0px;" width="48" height="48" viewBox="0 0 48 48"><g fill="none" stroke="#c23a3a" stroke-width="4"><circle cx="24" cy="24" r="20"/><rect x="18" y="18" width="12" height="12"/></g></svg>
<div class="t" style="left:2226px;top:1205.5px;font-size:29px;line-height:29px;color:#1e1b1b;letter-spacing:1.667px;font-weight:400;">test category</div>
<svg style="position:absolute;left:2776px;top:1195.0px;" width="48" height="40" viewBox="0 0 48 40"><g transform="translate(0.6,0.9) scale(0.945)" fill="none" stroke="#1e1b1b" stroke-width="4.3" stroke-linecap="round" stroke-linejoin="round"><path d="M5.9 29.7 A17 17 0 1 1 33.8 12.3 A10.5 10.5 0 0 1 40 33.2"/><path d="M15.5 29.5 L22.5 37 L34 25.5"/></g></svg>
<svg style="position:absolute;left:3001px;top:1190.0px;" width="48" height="48" viewBox="0 0 24 24"><path fill="#2c2828" d="M12 2C6.48 2 2 6.48 2 12s4.48 10 10 10 10-4.48 10-10S17.52 2 12 2zm-1 17.930c-3.95-.49-7-3.850-7-7.930 0-.62.08-1.21.21-1.79L9 15v1c0 1.1.9 2 2 2v1.93zm6.9-2.54c-.26-.81-1-1.39-1.9-1.39h-1v-3c0-.55-.45-1-1-1H8v-2h2c.55 0 1-.45 1-1V7h2c1.1 0 2-.9 2-2v-.41c2.93 1.19 5 4.06 5 7.41 0 2.08-.8 3.97-2.1 5.39z"/></svg>
<svg style="position:absolute;left:3258px;top:1195.0px;" width="48" height="48" viewBox="0 0 24 24"><path fill="#1e1b1b" d="M3 17.25V21h3.75L17.81 9.94l-3.75-3.75L3 17.25zM20.71 7.04c.39-.39.39-1.02 0-1.41l-2.34-2.34c-.39-.39-1.02-.39-1.41 0l-1.83 1.83 3.75 3.75 1.83-1.83z"/></svg>
<div style="position:absolute;left:528px;top:1374px;width:2818px;height:2px;background:#dedede"></div>
<svg style="position:absolute;left:544px;top:1291.0px;" width="64" height="64" viewBox="0 0 64 64"><defs><radialGradient id="p6" cx="45%" cy="40%" r="60%"><stop offset="0" stop-color="#b8385a"/><stop offset=".55" stop-color="#8c2c44"/><stop offset="1" stop-color="#5a2a33"/></radialGradient><clipPath id="clip6"><circle cx="32" cy="32" r="32"/></clipPath></defs><circle cx="32" cy="32" r="32" fill="url(#p6)"/><g clip-path="url(#clip6)"><ellipse cx="40" cy="16" rx="14" ry="8" fill="#c2406a" opacity=".8"/><ellipse cx="50" cy="34" rx="12" ry="7" fill="#b13a5c" opacity=".8"/><rect x="0" y="36" width="40" height="14" fill="#c9625a" opacity=".75"/><ellipse cx="42" cy="50" rx="16" ry="8" fill="#4a2c30" opacity=".8"/><ellipse cx="12" cy="52" rx="8" ry="7" fill="#5f9a8a" opacity=".7"/><ellipse cx="22" cy="12" rx="8" ry="5" fill="#3c2f35" opacity=".7"/><circle cx="20" cy="22" r="2" fill="#e07aa0"/><circle cx="44" cy="42" r="2" fill="#e8c0c8"/></g></svg>
<div class="t" style="left:641px;top:1309.5px;font-size:29px;line-height:29px;color:#9f3f1f;letter-spacing:1.115px;font-weight:400;text-decoration:underline;text-decoration-thickness:4px;text-underline-offset:3px;">00 NN-documentation (v1.0)</div>
<div class="t" style="left:1141px;top:1287.5px;font-size:29px;line-height:29px;color:#1e1b1b;letter-spacing:0.111px;font-weight:400;">HTTP Proxy</div>
<div class="t" style="left:1141px;top:1331.5px;font-size:29px;line-height:29px;color:#1e1b1b;letter-spacing:1.000px;font-weight:400;">Gravitee</div>
<div class="t" style="left:1579.5px;top:1309.5px;font-size:29px;line-height:29px;color:#1e1b1b;letter-spacing:2.000px;font-weight:400;">/nn-documentation/</div>
<svg style="position:absolute;left:1379.6px;top:1294.0px;" width="48" height="48" viewBox="0 0 48 48"><g fill="none" stroke="#55a97b" stroke-width="4" stroke-linejoin="round"><circle cx="24" cy="24" r="20"/><path d="M20.5 17 L31.5 24 L20.5 31 Z"/></g></svg>
<div class="t" style="left:1969px;top:1309.5px;font-size:29px;line-height:29px;color:#1e1b1b;letter-spacing:1.846px;font-weight:400;">china-internet</div>
<div class="t" style="left:2226px;top:1285.5px;font-size:29px;line-height:29px;color:#1e1b1b;letter-spacing:0.700px;font-weight:400;">NN Category</div>
<div style="position:absolute;left:2234px;top:1321.0px;width:110px;height:48px;border-radius:24px;background:#e3e3e3"></div>
<div class="t" style="left:2249.5px;top:1334.2px;font-size:24px;line-height:24px;color:#1e1b1b;letter-spacing:0.680px;font-weight:400;">1 More</div>
<svg style="position:absolute;left:2776px;top:1299.0px;" width="48" height="40" viewBox="0 0 48 40"><g transform="translate(0.6,0.9) scale(0.945)" fill="none" stroke="#1e1b1b" stroke-width="4.3" stroke-linecap="round" stroke-linejoin="round"><path d="M5.9 29.7 A17 17 0 1 1 33.8 12.3 A10.5 10.5 0 0 1 40 33.2"/><path d="M15.5 29.5 L22.5 37 L34 25.5"/></g></svg>
<svg style="position:absolute;left:3001px;top:1294.0px;" width="48" height="48" viewBox="0 0 24 24"><path fill="#2c2828" d="M12 2C6.48 2 2 6.48 2 12s4.48 10 10 10 10-4.48 10-10S17.52 2 12 2zm-1 17.930c-3.95-.49-7-3.850-7-7.930 0-.62.08-1.21.21-1.79L9 15v1c0 1.1.9 2 2 2v1.93zm6.9-2.54c-.26-.81-1-1.39-1.9-1.39h-1v-3c0-.55-.45-1-1-1H8v-2h2c.55 0 1-.45 1-1V7h2c1.1 0 2-.9 2-2v-.41c2.93 1.19 5 4.06 5 7.41 0 2.08-.8 3.97-2.1 5.39z"/></svg>
<svg style="position:absolute;left:3258px;top:1299.0px;" width="48" height="48" viewBox="0 0 24 24"><path fill="#1e1b1b" d="M3 17.25V21h3.75L17.81 9.94l-3.75-3.75L3 17.25zM20.71 7.04c.39-.39.39-1.02 0-1.41l-2.34-2.34c-.39-.39-1.02-.39-1.41 0l-1.83 1.83 3.75 3.75 1.83-1.83z"/></svg>
<div style="position:absolute;left:528px;top:1478px;width:2818px;height:2px;background:#dedede"></div>
<svg style="position:absolute;left:544px;top:1395.0px;" width="64" height="64" viewBox="0 0 64 64"><path d="M24 0.2999999999999998 L31.7 8 L24 15.7 L16.3 8 Z" fill="#5a5a5a"/><path d="M40 0.2999999999999998 L47.7 8 L40 15.7 L32.3 8 Z" fill="#5a5a5a"/><path d="M8 16.3 L15.7 24 L8 31.7 L0.2999999999999998 24 Z" fill="#5a5a5a"/><path d="M8 32.3 L15.7 40 L8 47.7 L0.2999999999999998 40 Z" fill="#5a5a5a"/><path d="M56 16.3 L63.7 24 L56 31.7 L48.3 24 Z" fill="#5a5a5a"/><path d="M56 32.3 L63.7 40 L56 47.7 L48.3 40 Z" fill="#5a5a5a"/><path d="M24 48.3 L31.7 56 L24 63.7 L16.3 56 Z" fill="#5a5a5a"/><path d="M40 48.3 L47.7 56 L40 63.7 L32.3 56 Z" fill="#5a5a5a"/><path transform="rotate(0 32 32)" d="M5 13 Q9 5 13 4 Q12 10 5 13 Z" fill="#c8c8e0"/><path transform="rotate(90 32 32)" d="M5 13 Q9 5 13 4 Q12 10 5 13 Z" fill="#c8c8e0"/><path transform="rotate(180 32 32)" d="M5 13 Q9 5 13 4 Q12 10 5 13 Z" fill="#c8c8e0"/><path transform="rotate(270 32 32)" d="M5 13 Q9 5 13 4 Q12 10 5 13 Z" fill="#c8c8e0"/><g fill="#8a94d0"><path d="M25 16 L32 16 L32 27 Z"/><path d="M48 24 L48 32 L36 32 Z"/><path d="M40 48 L32 48 L32 36 Z"/><path d="M16 40 L16 32 L28 32 Z"/></g></svg>
<div class="t" style="left:641px;top:1413.5px;font-size:29px;line-height:29px;color:#9f3f1f;letter-spacing:1.071px;font-weight:400;text-decoration:underline;text-decoration-thickness:4px;text-underline-offset:3px;">00 - template (&amp;éé&amp;e)</div>
<div class="t" style="left:1141px;top:1391.5px;font-size:29px;line-height:29px;color:#1e1b1b;letter-spacing:0.111px;font-weight:400;">HTTP Proxy</div>
<div class="t" style="left:1141px;top:1435.5px;font-size:29px;line-height:29px;color:#1e1b1b;letter-spacing:1.000px;font-weight:400;">Gravitee</div>
<div class="t" style="left:1579.5px;top:1413.5px;font-size:29px;line-height:29px;color:#1e1b1b;letter-spacing:3.000px;font-weight:400;">/titito/</div>
<svg style="position:absolute;left:1379.6px;top:1398.0px;" width="48" height="48" viewBox="0 0 48 48"><g fill="none" stroke="#55a97b" stroke-width="4" stroke-linejoin="round"><circle cx="24" cy="24" r="20"/><path d="M20.5 17 L31.5 24 L20.5 31 Z"/></g></svg>
<svg style="position:absolute;left:2776px;top:1403.0px;" width="48" height="40" viewBox="0 0 48 40"><g transform="translate(0.6,0.9) scale(0.945)" fill="none" stroke="#1e1b1b" stroke-width="4.3" stroke-linecap="round" stroke-linejoin="round"><path d="M5.9 29.7 A17 17 0 1 1 33.8 12.3 A10.5 10.5 0 0 1 40 33.2"/><path d="M19.5 28.5 L28.5 37 M28.5 28.5 L19.5 37"/></g></svg>
<svg style="position:absolute;left:3000.6px;top:1398.0px;" width="48" height="48" viewBox="0 0 24 24"><path fill="#2c2828" d="M18 8h-1V6c0-2.76-2.24-5-5-5S7 3.24 7 6v2H6c-1.1 0-2 .9-2 2v10c0 1.1.9 2 2 2h12c1.1 0 2-.9 2-2V10c0-1.1-.9-2-2-2zm-6 9c-1.1 0-2-.9-2-2s.9-2 2-2 2 .9 2 2-.9 2-2 2zm3.1-9H8.9V6c0-1.71 1.39-3.1 3.1-3.1 1.71 0 3.1 1.39 3.1 3.1v2z"/></svg>
<svg style="position:absolute;left:3258px;top:1403.0px;" width="48" height="48" viewBox="0 0 24 24"><path fill="#1e1b1b" d="M3 17.25V21h3.75L17.81 9.94l-3.75-3.75L3 17.25zM20.71 7.04c.39-.39.39-1.02 0-1.41l-2.34-2.34c-.39-.39-1.02-.39-1.41 0l-1.83 1.83 3.75 3.75 1.83-1.83z"/></svg>
<div style="position:absolute;left:528px;top:1612px;width:2818px;height:2px;background:#dedede"></div>
<svg style="position:absolute;left:544px;top:1514.0px;" width="64" height="64" viewBox="0 0 64 64"><path d="M24 0.2999999999999998 L31.7 8 L24 15.7 L16.3 8 Z" fill="#e0b8dc"/><path d="M40 0.2999999999999998 L47.7 8 L40 15.7 L32.3 8 Z" fill="#e0b8dc"/><path d="M8 16.3 L15.7 24 L8 31.7 L0.2999999999999998 24 Z" fill="#e0b8dc"/><path d="M8 32.3 L15.7 40 L8 47.7 L0.2999999999999998 40 Z" fill="#e0b8dc"/><path d="M56 16.3 L63.7 24 L56 31.7 L48.3 24 Z" fill="#e0b8dc"/><path d="M56 32.3 L63.7 40 L56 47.7 L48.3 40 Z" fill="#e0b8dc"/><path d="M24 48.3 L31.7 56 L24 63.7 L16.3 56 Z" fill="#e0b8dc"/><path d="M40 48.3 L47.7 56 L40 63.7 L32.3 56 Z" fill="#e0b8dc"/><path transform="rotate(0 32 32)" d="M5 13 Q9 5 13 4 Q12 10 5 13 Z" fill="#b87ab4"/><path transform="rotate(90 32 32)" d="M5 13 Q9 5 13 4 Q12 10 5 13 Z" fill="#b87ab4"/><path transform="rotate(180 32 32)" d="M5 13 Q9 5 13 4 Q12 10 5 13 Z" fill="#b87ab4"/><path transform="rotate(270 32 32)" d="M5 13 Q9 5 13 4 Q12 10 5 13 Z" fill="#b87ab4"/><g fill="#555"><path d="M25 16 L32 16 L32 27 Z"/><path d="M48 24 L48 32 L37 32 Z"/><path d="M40 48 L32 48 L32 37 Z"/><path d="M16 40 L16 32 L27 32 Z"/></g></svg>
<div class="t" style="left:641px;top:1532.5px;font-size:29px;line-height:29px;color:#9f3f1f;letter-spacing:0.205px;font-weight:400;text-decoration:underline;text-decoration-thickness:4px;text-underline-offset:3px;">01 Lilia Updated (3.1)</div>
<div class="t" style="left:1141px;top:1488.5px;font-size:29px;line-height:29px;color:#1e1b1b;letter-spacing:-0.333px;font-weight:400;">V2 HTTP</div>
<div class="t" style="left:1141px;top:1532.5px;font-size:29px;line-height:29px;color:#1e1b1b;letter-spacing:0.500px;font-weight:400;">Proxy</div>
<div class="t" style="left:1141px;top:1576.5px;font-size:29px;line-height:29px;color:#1e1b1b;letter-spacing:1.000px;font-weight:400;">Gravitee</div>
<div class="t" style="left:1579.5px;top:1532.5px;font-size:29px;line-height:29px;color:#1e1b1b;letter-spacing:1.600px;font-weight:400;">/lilia</div>
<svg style="position:absolute;left:1379.6px;top:1517.0px;" width="48" height="48" viewBox="0 0 48 48"><g fill="none" stroke="#55a97b" stroke-width="4" stroke-linejoin="round"><circle cx="24" cy="24" r="20"/><path d="M20.5 17 L31.5 24 L20.5 31 Z"/></g></svg>
<div class="t" style="left:1969px;top:1532.5px;font-size:29px;line-height:29px;color:#1e1b1b;letter-spacing:1.500px;font-weight:400;">china</div>
<div style="position:absolute;left:2059px;top:1522.0px;width:110px;height:48px;border-radius:24px;background:#e3e3e3"></div>
<div class="t" style="left:2074.5px;top:1535.2px;font-size:24px;line-height:24px;color:#1e1b1b;letter-spacing:0.680px;font-weight:400;">1 More</div>
<div class="t" style="left:2226px;top:1532.5px;font-size:29px;line-height:29px;color:#1e1b1b;letter-spacing:1.556px;font-weight:400;">Test Categ</div>
<svg style="position:absolute;left:2776px;top:1522.0px;" width="48" height="40" viewBox="0 0 48 40"><g transform="translate(0.6,0.9) scale(0.945)" fill="none" stroke="#1e1b1b" stroke-width="4.3" stroke-linecap="round" stroke-linejoin="round"><path d="M5.9 29.7 A17 17 0 1 1 33.8 12.3 A10.5 10.5 0 0 1 40 33.2"/><path d="M15.5 29.5 L22.5 37 L34 25.5"/></g></svg>
<svg style="position:absolute;left:3000.6px;top:1517.0px;" width="48" height="48" viewBox="0 0 24 24"><path fill="#2c2828" d="M18 8h-1V6c0-2.76-2.24-5-5-5S7 3.24 7 6v2H6c-1.1 0-2 .9-2 2v10c0 1.1.9 2 2 2h12c1.1 0 2-.9 2-2V10c0-1.1-.9-2-2-2zm-6 9c-1.1 0-2-.9-2-2s.9-2 2-2 2 .9 2 2-.9 2-2 2zm3.1-9H8.9V6c0-1.71 1.39-3.1 3.1-3.1 1.71 0 3.1 1.39 3.1 3.1v2z"/></svg>
<svg style="position:absolute;left:3258px;top:1522.0px;" width="48" height="48" viewBox="0 0 24 24"><path fill="#1e1b1b" d="M3 17.25V21h3.75L17.81 9.94l-3.75-3.75L3 17.25zM20.71 7.04c.39-.39.39-1.02 0-1.41l-2.34-2.34c-.39-.39-1.02-.39-1.41 0l-1.83 1.83 3.75 3.75 1.83-1.83z"/></svg>
<div style="position:absolute;left:528px;top:1746px;width:2818px;height:2px;background:#dedede"></div>
<svg style="position:absolute;left:544px;top:1648.0px;" width="64" height="64" viewBox="0 0 64 64"><defs><linearGradient id="p9" x1="0" y1="0" x2="0" y2="1"><stop offset="0" stop-color="#9c8fb5"/><stop offset=".35" stop-color="#e39a9b"/><stop offset=".55" stop-color="#a7c3d6"/><stop offset=".8" stop-color="#8fb7c4"/><stop offset="1" stop-color="#e8a283"/></linearGradient></defs><circle cx="32" cy="32" r="32" fill="url(#p9)"/></svg>
<div class="t" style="left:641px;top:1666.5px;font-size:29px;line-height:29px;color:#9f3f1f;letter-spacing:0.840px;font-weight:400;text-decoration:underline;text-decoration-thickness:4px;text-underline-offset:3px;">01 Lilia Updated (jourdi)</div>
<div class="t" style="left:1141px;top:1622.5px;font-size:29px;line-height:29px;color:#1e1b1b;letter-spacing:-0.333px;font-weight:400;">V2 HTTP</div>
<div class="t" style="left:1141px;top:1666.5px;font-size:29px;line-height:29px;color:#1e1b1b;letter-spacing:0.500px;font-weight:400;">Proxy</div>
<div class="t" style="left:1141px;top:1710.5px;font-size:29px;line-height:29px;color:#1e1b1b;letter-spacing:1.000px;font-weight:400;">Gravitee</div>
<div class="t" style="left:1579.5px;top:1666.5px;font-size:29px;line-height:29px;color:#1e1b1b;letter-spacing:1.400px;font-weight:400;">/duplicatedAPI-jourdi</div>
<svg style="position:absolute;left:1379.6px;top:1651.0px;" width="48" height="48" viewBox="0 0 48 48"><g fill="none" stroke="#55a97b" stroke-width="4" stroke-linejoin="round"><circle cx="24" cy="24" r="20"/><path d="M20.5 17 L31.5 24 L20.5 31 Z"/></g></svg>
<div class="t" style="left:1969px;top:1666.5px;font-size:29px;line-height:29px;color:#1e1b1b;letter-spacing:1.500px;font-weight:400;">china</div>
<div style="position:absolute;left:2059px;top:1656.0px;width:110px;height:48px;border-radius:24px;background:#e3e3e3"></div>
<div class="t" style="left:2074.5px;top:1669.2px;font-size:24px;line-height:24px;color:#1e1b1b;letter-spacing:0.680px;font-weight:400;">1 More</div>
<div class="t" style="left:2226px;top:1666.5px;font-size:29px;line-height:29px;color:#1e1b1b;letter-spacing:1.556px;font-weight:400;">Test Categ</div>
<svg style="position:absolute;left:2776px;top:1656.0px;" width="48" height="40" viewBox="0 0 48 40"><g transform="translate(0.6,0.9) scale(0.945)" fill="none" stroke="#1e1b1b" stroke-width="4.3" stroke-linecap="round" stroke-linejoin="round"><path d="M5.9 29.7 A17 17 0 1 1 33.8 12.3 A10.5 10.5 0 0 1 40 33.2"/><path d="M19.5 28.5 L28.5 37 M28.5 28.5 L19.5 37"/></g></svg>
<svg style="position:absolute;left:3000.6px;top:1651.0px;" width="48" height="48" viewBox="0 0 24 24"><path fill="#2c2828" d="M18 8h-1V6c0-2.76-2.24-5-5-5S7 3.24 7 6v2H6c-1.1 0-2 .9-2 2v10c0 1.1.9 2 2 2h12c1.1 0 2-.9 2-2V10c0-1.1-.9-2-2-2zm-6 9c-1.1 0-2-.9-2-2s.9-2 2-2 2 .9 2 2-.9 2-2 2zm3.1-9H8.9V6c0-1.71 1.39-3.1 3.1-3.1 1.71 0 3.1 1.39 3.1 3.1v2z"/></svg>
<svg style="position:absolute;left:3258px;top:1656.0px;" width="48" height="48" viewBox="0 0 24 24"><path fill="#1e1b1b" d="M3 17.25V21h3.75L17.81 9.94l-3.75-3.75L3 17.25zM20.71 7.04c.39-.39.39-1.02 0-1.41l-2.34-2.34c-.39-.39-1.02-.39-1.41 0l-1.83 1.83 3.75 3.75 1.83-1.83z"/></svg>
<div style="position:absolute;left:528px;top:1880px;width:2818px;height:2px;background:#dedede"></div>
<svg style="position:absolute;left:544px;top:1782.0px;" width="64" height="64" viewBox="0 0 64 64"><g fill="#555"><ellipse cx="24" cy="8" rx="5" ry="6"/><ellipse cx="40" cy="8" rx="5" ry="6"/><ellipse cx="8" cy="24" rx="5" ry="6"/><ellipse cx="8" cy="40" rx="5" ry="6"/><ellipse cx="56" cy="24" rx="5" ry="6"/><ellipse cx="56" cy="40" rx="5" ry="6"/><ellipse cx="24" cy="56" rx="5" ry="6"/><ellipse cx="40" cy="56" rx="5" ry="6"/></g><rect x="16" y="16" width="32" height="32" fill="#a972cf"/><g fill="#fff"><path d="M26 20 L32 26 L26 32 L20 26 Z" fill="#fff"/><path d="M38 20 L44 26 L38 32 L32 26 Z" fill="#fff"/><path d="M26 32 L32 38 L26 44 L20 38 Z" fill="#fff"/><path d="M38 32 L44 38 L38 44 L32 38 Z" fill="#fff"/></g><path transform="rotate(0 32 32)" d="M9.6 9.4 L15.8 4.4 L15.8 15.8 Z" fill="#a972cf"/><path transform="rotate(90 32 32)" d="M9.6 9.4 L15.8 4.4 L15.8 15.8 Z" fill="#a972cf"/><path transform="rotate(180 32 32)" d="M9.6 9.4 L15.8 4.4 L15.8 15.8 Z" fill="#a972cf"/><path transform="rotate(270 32 32)" d="M9.6 9.4 L15.8 4.4 L15.8 15.8 Z" fill="#a972cf"/></svg>
<div class="t" style="left:641px;top:1800.5px;font-size:29px;line-height:29px;color:#9f3f1f;letter-spacing:0.458px;font-weight:400;text-decoration:underline;text-decoration-thickness:4px;text-underline-offset:3px;">01 Lilia Updated (12345)</div>
<div class="t" style="left:1141px;top:1756.5px;font-size:29px;line-height:29px;color:#1e1b1b;letter-spacing:-0.333px;font-weight:400;">V2 HTTP</div>
<div class="t" style="left:1141px;top:1800.5px;font-size:29px;line-height:29px;color:#1e1b1b;letter-spacing:0.500px;font-weight:400;">Proxy</div>
<div class="t" style="left:1141px;top:1844.5px;font-size:29px;line-height:29px;color:#1e1b1b;letter-spacing:1.000px;font-weight:400;">Gravitee</div>
<div class="t" style="left:1579.5px;top:1800.5px;font-size:29px;line-height:29px;color:#1e1b1b;letter-spacing:3.667px;font-weight:400;">/twe</div>
<svg style="position:absolute;left:1379.6px;top:1785.0px;" width="48" height="48" viewBox="0 0 48 48"><g fill="none" stroke="#55a97b" stroke-width="4" stroke-linejoin="round"><circle cx="24" cy="24" r="20"/><path d="M20.5 17 L31.5 24 L20.5 31 Z"/></g></svg>
<div class="t" style="left:1969px;top:1800.5px;font-size:29px;line-height:29px;color:#1e1b1b;letter-spacing:1.500px;font-weight:400;">china</div>
<div style="position:absolute;left:2059px;top:1790.0px;width:110px;height:48px;border-radius:24px;background:#e3e3e3"></div>
<div class="t" style="left:2074.5px;top:1803.2px;font-size:24px;line-height:24px;color:#1e1b1b;letter-spacing:0.680px;font-weight:400;">1 More</div>
<div class="t" style="left:2226px;top:1776.5px;font-size:29px;line-height:29px;color:#1e1b1b;letter-spacing:1.556px;font-weight:400;">Test Categ</div>
<div style="position:absolute;left:2234px;top:1812.0px;width:110px;height:48px;border-radius:24px;background:#e3e3e3"></div>
<div class="t" style="left:2249.5px;top:1825.2px;font-size:24px;line-height:24px;color:#1e1b1b;letter-spacing:0.680px;font-weight:400;">1 More</div>
<svg style="position:absolute;left:2776px;top:1790.0px;" width="48" height="40" viewBox="0 0 48 40"><g transform="translate(0.6,0.9) scale(0.945)" fill="none" stroke="#1e1b1b" stroke-width="4.3" stroke-linecap="round" stroke-linejoin="round"><path d="M5.9 29.7 A17 17 0 1 1 33.8 12.3 A10.5 10.5 0 0 1 40 33.2"/><path d="M15.5 29.5 L22.5 37 L34 25.5"/></g></svg>
<svg style="position:absolute;left:3000.6px;top:1785.0px;" width="48" height="48" viewBox="0 0 24 24"><path fill="#2c2828" d="M18 8h-1V6c0-2.76-2.24-5-5-5S7 3.24 7 6v2H6c-1.1 0-2 .9-2 2v10c0 1.1.9 2 2 2h12c1.1 0 2-.9 2-2V10c0-1.1-.9-2-2-2zm-6 9c-1.1 0-2-.9-2-2s.9-2 2-2 2 .9 2 2-.9 2-2 2zm3.1-9H8.9V6c0-1.71 1.39-3.1 3.1-3.1 1.71 0 3.1 1.39 3.1 3.1v2z"/></svg>
<svg style="position:absolute;left:3258px;top:1790.0px;" width="48" height="48" viewBox="0 0 24 24"><path fill="#1e1b1b" d="M3 17.25V21h3.75L17.81 9.94l-3.75-3.75L3 17.25zM20.71 7.04c.39-.39.39-1.02 0-1.41l-2.34-2.34c-.39-.39-1.02-.39-1.41 0l-1.83 1.83 3.75 3.75 1.83-1.83z"/></svg>
<svg style="position:absolute;left:544px;top:1916.0px;" width="64" height="64" viewBox="0 0 64 64"><path d="M24 0.2999999999999998 L31.7 8 L24 15.7 L16.3 8 Z" fill="#555555"/><path d="M40 0.2999999999999998 L47.7 8 L40 15.7 L32.3 8 Z" fill="#555555"/><path d="M8 16.3 L15.7 24 L8 31.7 L0.2999999999999998 24 Z" fill="#555555"/><path d="M8 32.3 L15.7 40 L8 47.7 L0.2999999999999998 40 Z" fill="#555555"/><path d="M56 16.3 L63.7 24 L56 31.7 L48.3 24 Z" fill="#555555"/><path d="M56 32.3 L63.7 40 L56 47.7 L48.3 40 Z" fill="#555555"/><path d="M24 48.3 L31.7 56 L24 63.7 L16.3 56 Z" fill="#555555"/><path d="M40 48.3 L47.7 56 L40 63.7 L32.3 56 Z" fill="#555555"/><path transform="rotate(0 32 32)" d="M9.6 9.4 L15.8 4.4 L15.8 15.8 Z" fill="#555555"/><path transform="rotate(90 32 32)" d="M9.6 9.4 L15.8 4.4 L15.8 15.8 Z" fill="#555555"/><path transform="rotate(180 32 32)" d="M9.6 9.4 L15.8 4.4 L15.8 15.8 Z" fill="#555555"/><path transform="rotate(270 32 32)" d="M9.6 9.4 L15.8 4.4 L15.8 15.8 Z" fill="#555555"/></svg>
<div class="t" style="left:1141px;top:1890.5px;font-size:29px;line-height:29px;color:#1e1b1b;letter-spacing:-0.333px;font-weight:400;">V2 HTTP</div>
<div class="t" style="left:1141px;top:1934.5px;font-size:29px;line-height:29px;color:#1e1b1b;letter-spacing:1.000px;font-weight:400;">Proxy</div>
<div class="t" style="left:1141px;top:1978.5px;font-size:29px;line-height:29px;color:#1e1b1b;letter-spacing:1.000px;font-weight:400;">Gravitee</div>
<svg style="position:absolute;left:1379.6px;top:1919.0px;" width="48" height="48" viewBox="0 0 48 48"><g fill="none" stroke="#c23a3a" stroke-width="4"><circle cx="24" cy="24" r="20"/><rect x="18" y="18" width="12" height="12"/></g></svg>
<svg style="position:absolute;left:3000.6px;top:1919.0px;" width="48" height="48" viewBox="0 0 24 24"><path fill="#2c2828" d="M18 8h-1V6c0-2.76-2.24-5-5-5S7 3.24 7 6v2H6c-1.1 0-2 .9-2 2v10c0 1.1.9 2 2 2h12c1.1 0 2-.9 2-2V10c0-1.1-.9-2-2-2zm-6 9c-1.1 0-2-.9-2-2s.9-2 2-2 2 .9 2 2-.9 2-2 2zm3.1-9H8.9V6c0-1.71 1.39-3.1 3.1-3.1 1.71 0 3.1 1.39 3.1 3.1v2z"/></svg>
<script>(function(){var w=window.innerWidth;if(w&&Math.abs(w-3456)>2){document.body.style.zoom=(w/3456);}})();</script>
</body></html>
